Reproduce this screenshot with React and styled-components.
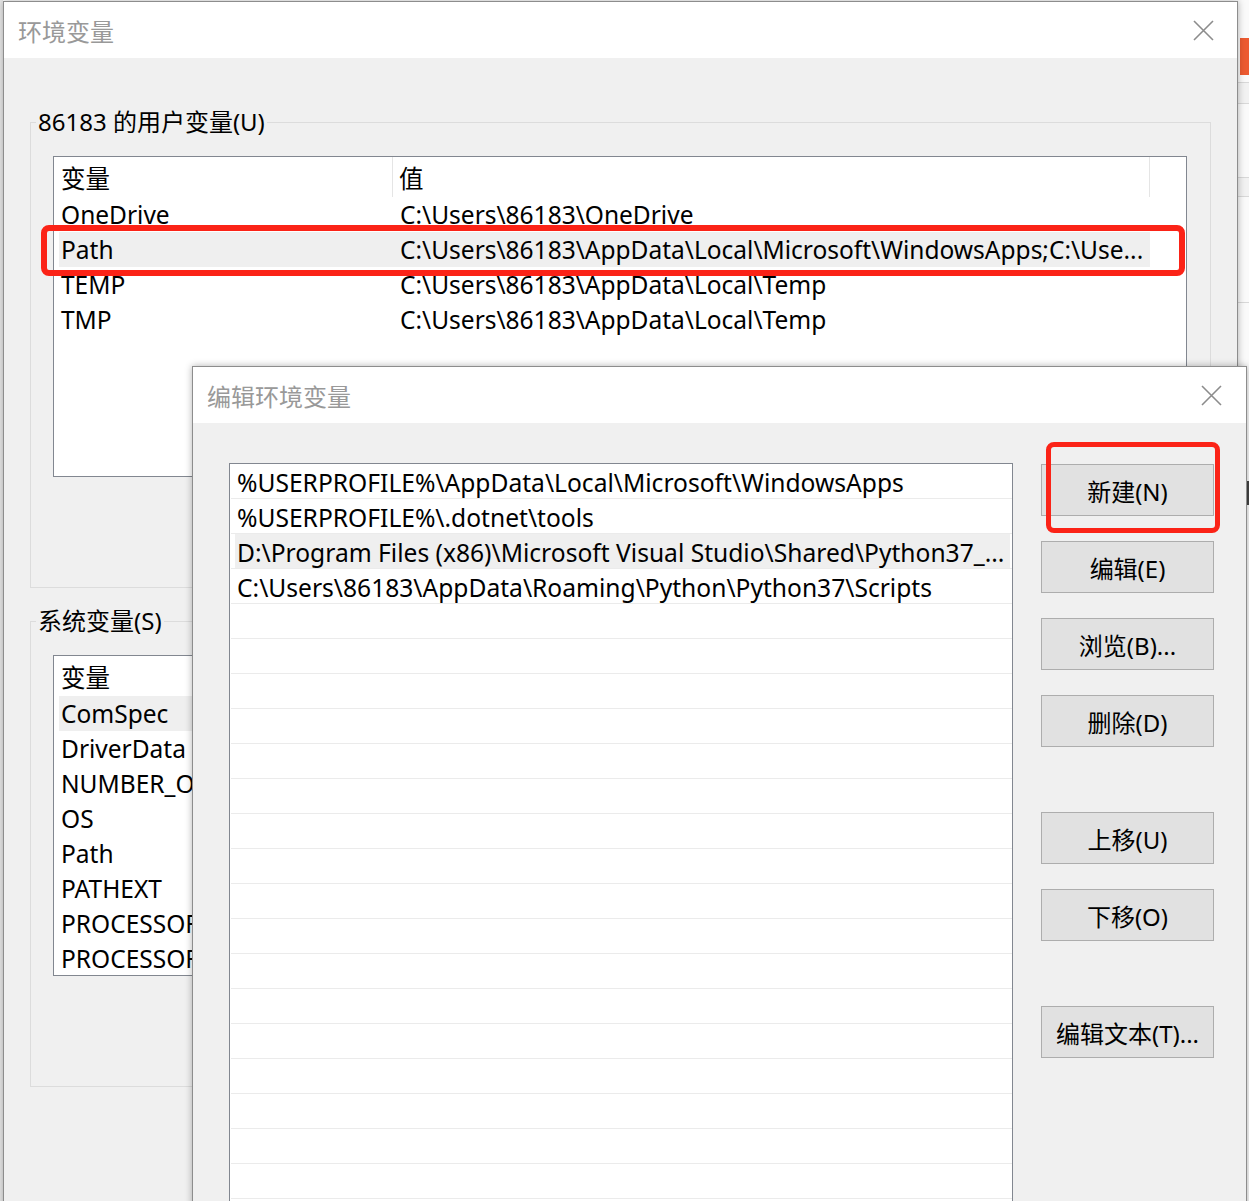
import React from 'react';
import styled, { createGlobalStyle } from 'styled-components';

const GlobalStyle = createGlobalStyle`
  html, body {
    margin: 0;
    padding: 0;
    background: #ffffff;
  }
  body {
    font-family: "Segoe UI", "Noto Sans", "Noto Sans CJK SC", sans-serif;
  }
  * {
    box-sizing: border-box;
  }
`;

const Desktop = styled.div`
  position: relative;
  width: 1249px;
  height: 1201px;
  overflow: hidden;
  background: #f4f4f4;
  font-size: 24px;
  color: #000;
`;

// the app that peeks out behind the dialogs
const BackApp = styled.div`
  position: absolute;
  inset: 0;
  display: flex;
  justify-content: space-between;
  background: #ffffff;
`;

const BackStrip = styled.div`
  width: ${(p) => p.$w}px;
  display: flex;
  flex-direction: column;
  align-items: flex-end;
  background: ${(p) => p.$bg};
`;

const BackLine = styled.div`
  width: 100%;
  height: ${(p) => p.$h}px;
  border-bottom: 1px solid #d8d8d8;
  background: ${(p) => p.$bg || 'transparent'};
`;

const OrangeTag = styled.div`
  width: 9px;
  height: 37px;
  margin-top: 38px;
  background: #ec5a31;
`;

const DarkTab = styled.div`
  width: 3px;
  height: 24px;
  margin-top: 178px;
  background: #444;
`;

const Window = styled.div`
  position: absolute;
  left: ${(p) => p.$x}px;
  top: ${(p) => p.$y}px;
  width: ${(p) => p.$w}px;
  height: ${(p) => p.$h}px;
  display: flex;
  flex-direction: column;
  background: #f0f0f0;
  border: 1px solid #8d8d8d;
  box-shadow: 0 0 7px rgba(0, 0, 0, 0.3);
`;

const TitleBar = styled.div`
  height: 56px;
  flex-shrink: 0;
  display: flex;
  align-items: center;
  justify-content: space-between;
  padding: 0 ${(p) => p.$right}px 0 14px;
  background: #ffffff;
`;

const Title = styled.span`
  color: #999999;
  font-family: "Noto Sans CJK SC", sans-serif;
  font-size: 24px;
`;

const CloseIcon = () => (
  <svg width="21" height="21" viewBox="0 0 21 21">
    <path d="M1 1 L20 20 M20 1 L1 20" stroke="#8c8c8c" strokeWidth="1.6" fill="none" />
  </svg>
);

const MainBody = styled.div`
  flex: 1;
  display: flex;
  flex-direction: column;
  padding-left: 26px;
`;

const GroupBox = styled.fieldset`
  width: 1181px;
  margin: ${(p) => p.$top}px 0 0 0;
  padding: 0 0 110px 5px;
  border: 1px solid #dcdcdc;
  min-inline-size: 0;
`;

const GroupLabel = styled.legend`
  padding: 0 2px;
  line-height: 32px;
  font-size: 24px;
`;

const ListView = styled.div`
  width: 1134px;
  height: 321px;
  margin: 18px 0 0 17px;
  border: 1px solid #828790;
  background: #ffffff;
  overflow: hidden;
  font-size: 24.5px;
`;

const HeaderRow = styled.div`
  display: grid;
  grid-template-columns: 339px 757px;
  height: 40px;
`;

const HeaderCell = styled.div`
  padding-left: ${(p) => p.$pad}px;
  padding-top: 3px;
  line-height: 37px;
  border-right: 1px solid #e5e5e5;
  white-space: nowrap;
`;

const ItemRow = styled.div`
  display: grid;
  grid-template-columns: 341px 750px;
  width: 1091px;
  height: 35px;
  margin-left: 5px;
  line-height: 35px;
  background: ${(p) => (p.$active ? '#efefef' : 'transparent')};
`;

const ItemCell = styled.div`
  padding-left: ${(p) => p.$pad || 0}px;
  white-space: nowrap;
  overflow: hidden;
`;

const EditBody = styled.div`
  flex: 1;
  display: flex;
  align-items: flex-start;
  padding: 40px 0 0 36px;
`;

const PathList = styled.div`
  width: 784px;
  align-self: stretch;
  border: 1px solid #828790;
  border-bottom: none;
  background: #ffffff;
  overflow: hidden;
  font-size: 24.6px;
`;

const PathRow = styled.div`
  height: 35px;
  padding: 0 2px 0 4px;
  margin-left: 1px;
  border-bottom: 1px solid #ebebeb;
`;

const PathText = styled.div`
  height: 34px;
  padding-left: 2px;
  line-height: 38px;
  white-space: nowrap;
  overflow: hidden;
  background: ${(p) => (p.$active ? '#efefef' : 'transparent')};
`;

const ButtonColumn = styled.div`
  display: flex;
  flex-direction: column;
  gap: 65px;
  margin: 1px 0 0 28px;
`;

const ButtonGroup = styled.div`
  display: flex;
  flex-direction: column;
  gap: 25px;
`;

const Button = styled.button`
  width: 173px;
  height: 52px;
  padding: 0;
  background: #e1e1e1;
  border: 1px solid #adadad;
  color: #000;
  font-family: inherit;
  font-size: 24px;
`;

const Marker = styled.div`
  position: absolute;
  left: ${(p) => p.$x}px;
  top: ${(p) => p.$y}px;
  width: ${(p) => p.$w}px;
  height: ${(p) => p.$h}px;
  border: ${(p) => p.$stroke}px solid #fb2317;
  border-radius: 8px;
  pointer-events: none;
`;

const userVars = [
  ['OneDrive', 'C:\\Users\\86183\\OneDrive'],
  ['Path', 'C:\\Users\\86183\\AppData\\Local\\Microsoft\\WindowsApps;C:\\Use...'],
  ['TEMP', 'C:\\Users\\86183\\AppData\\Local\\Temp'],
  ['TMP', 'C:\\Users\\86183\\AppData\\Local\\Temp'],
];

const systemVars = [
  ['ComSpec', 'C:\\WINDOWS\\system32\\cmd.exe'],
  ['DriverData', 'C:\\Windows\\System32\\Drivers\\DriverData'],
  ['NUMBER_OF_PROCESSORS', '8'],
  ['OS', 'Windows_NT'],
  ['Path', 'C:\\WINDOWS\\system32;C:\\WINDOWS;...'],
  ['PATHEXT', '.COM;.EXE;.BAT;.CMD;.VBS;.VBE;.JS;...'],
  ['PROCESSOR_ARCHITECTURE', 'AMD64'],
  ['PROCESSOR_IDENTIFIER', 'Intel64 Family 6 Model 142'],
];

const paths = [
  '%USERPROFILE%\\AppData\\Local\\Microsoft\\WindowsApps',
  '%USERPROFILE%\\.dotnet\\tools',
  'D:\\Program Files (x86)\\Microsoft Visual Studio\\Shared\\Python37_...',
  'C:\\Users\\86183\\AppData\\Roaming\\Python\\Python37\\Scripts',
];

const pathRows = [...paths, ...Array(18).fill('')];

const buttonGroups = [
  ['新建(N)', '编辑(E)', '浏览(B)...', '删除(D)'],
  ['上移(U)', '下移(O)'],
  ['编辑文本(T)...'],
];

const VarList = ({ rows, active }) => (
  <ListView>
    <HeaderRow>
      <HeaderCell $pad={7}>变量</HeaderCell>
      <HeaderCell $pad={6}>值</HeaderCell>
    </HeaderRow>
    {rows.map(([name, value]) => (
      <ItemRow key={name + value} $active={name === active}>
        <ItemCell $pad={2}>{name}</ItemCell>
        <ItemCell>{value}</ItemCell>
      </ItemRow>
    ))}
  </ListView>
);

const App = () => {
  return (
    <Desktop>
      <GlobalStyle />
      <BackApp>
        <BackStrip $w={3} $bg="#e9e9e9" />
        <BackStrip $w={12} $bg="#fafafa">
          <OrangeTag />
          <BackLine $h={8} />
          <BackLine $h={21} $bg="#f2f2f2" />
          <BackLine $h={74} />
          <BackLine $h={19} $bg="#f2f2f2" />
          <BackLine $h={106} />
          <DarkTab />
        </BackStrip>
      </BackApp>

      <Window $x={3} $y={1} $w={1235} $h={1230}>
        <TitleBar $right={23}>
          <Title>环境变量</Title>
          <CloseIcon />
        </TitleBar>
        <MainBody>
          <GroupBox $top={48}>
            <GroupLabel>86183 的用户变量(U)</GroupLabel>
            <VarList rows={userVars} active="Path" />
          </GroupBox>
          <GroupBox $top={17}>
            <GroupLabel>系统变量(S)</GroupLabel>
            <VarList rows={systemVars} active="ComSpec" />
          </GroupBox>
        </MainBody>
      </Window>

      <Window $x={192} $y={366} $w={1055} $h={860}>
        <TitleBar $right={24}>
          <Title>编辑环境变量</Title>
          <CloseIcon />
        </TitleBar>
        <EditBody>
          <PathList>
            {pathRows.map((p, i) => (
              <PathRow key={i}>
                <PathText $active={i === 2}>{p}</PathText>
              </PathRow>
            ))}
          </PathList>
          <ButtonColumn>
            {buttonGroups.map((group) => (
              <ButtonGroup key={group[0]}>
                {group.map((label) => (
                  <Button key={label}>{label}</Button>
                ))}
              </ButtonGroup>
            ))}
          </ButtonColumn>
        </EditBody>
      </Window>

      <Marker $x={41} $y={225} $w={1144} $h={51} $stroke={6} />
      <Marker $x={1046} $y={442} $w={174} $h={91} $stroke={5} />
    </Desktop>
  );
};

export default App;
